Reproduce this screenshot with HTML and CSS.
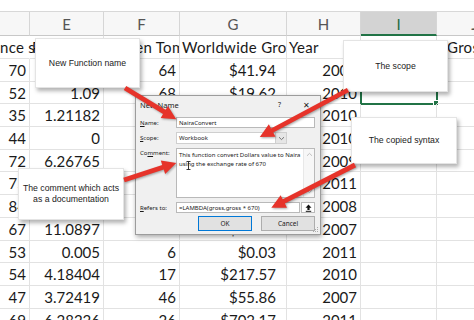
FILE: index.html
```html
<!DOCTYPE html>
<html lang="en">
<head>
    <meta charset="UTF-8">
    <meta name="viewport" content="width=device-width, initial-scale=1.0">
    <title>New Name - LAMBDA</title>
    <link rel="stylesheet" href="styles.css">
</head>
<body>

<div class="sheet">
    <div class="top-strip"></div>

    <div class="row head">
        <div class="cell"></div>
        <div class="cell">E</div>
        <div class="cell">F</div>
        <div class="cell">G</div>
        <div class="cell">H</div>
        <div class="cell picked">I</div>
        <div class="cell">J</div>
    </div>

    <div class="row first">
        <div class="cell txt spill">nce s</div>
        <div class="cell txt">Profitability</div>
        <div class="cell txt">Rotten Tomatoes %</div>
        <div class="cell txt">Worldwide Gross</div>
        <div class="cell txt">Year</div>
        <div class="cell"></div>
        <div class="cell txt gross">Gross</div>
    </div>

    <div class="row"><div class="cell">70</div><div class="cell">1.74</div><div class="cell">64</div><div class="cell money">$41.94</div><div class="cell">2008</div><div class="cell"></div><div class="cell"></div></div>
    <div class="row"><div class="cell">52</div><div class="cell">1.09</div><div class="cell">68</div><div class="cell money">$19.62</div><div class="cell">2010</div><div class="cell active"></div><div class="cell"></div></div>
    <div class="row"><div class="cell">35</div><div class="cell">1.21182</div><div class="cell">43</div><div class="cell money">$26.66</div><div class="cell">2010</div><div class="cell"></div><div class="cell"></div></div>
    <div class="row"><div class="cell">44</div><div class="cell">0</div><div class="cell">15</div><div class="cell money">$0.00</div><div class="cell">2010</div><div class="cell"></div><div class="cell"></div></div>
    <div class="row"><div class="cell">72</div><div class="cell">6.26765</div><div class="cell">87</div><div class="cell money">$93.40</div><div class="cell">2009</div><div class="cell"></div><div class="cell"></div></div>
    <div class="row"><div class="cell">75</div><div class="cell">2.36</div><div class="cell">54</div><div class="cell money">$25.31</div><div class="cell">2011</div><div class="cell"></div><div class="cell"></div></div>
    <div class="row"><div class="cell">84</div><div class="cell">1.98</div><div class="cell">89</div><div class="cell money">$8.37</div><div class="cell">2008</div><div class="cell"></div><div class="cell"></div></div>
    <div class="row"><div class="cell">67</div><div class="cell">11.0897</div><div class="cell">49</div><div class="cell money">$61.74</div><div class="cell">2007</div><div class="cell"></div><div class="cell"></div></div>
    <div class="row"><div class="cell">53</div><div class="cell">0.005</div><div class="cell">6</div><div class="cell money">$0.03</div><div class="cell">2011</div><div class="cell"></div><div class="cell"></div></div>
    <div class="row"><div class="cell">54</div><div class="cell">4.18404</div><div class="cell">17</div><div class="cell money">$217.57</div><div class="cell">2010</div><div class="cell"></div><div class="cell"></div></div>
    <div class="row"><div class="cell">47</div><div class="cell">3.72419</div><div class="cell">46</div><div class="cell money">$55.86</div><div class="cell">2007</div><div class="cell"></div><div class="cell"></div></div>
    <div class="row"><div class="cell">69</div><div class="cell">6.28226</div><div class="cell">26</div><div class="cell money">$702.17</div><div class="cell">2011</div><div class="cell"></div><div class="cell"></div></div>
</div>

<!-- callouts over the sheet -->
<div class="callout c-name">New Function name</div>
<div class="callout c-scope">The scope</div>
<div class="callout c-syntax">The copied syntax</div>
<div class="callout c-comment">The comment which acts<br>as a documentation</div>

<!-- New Name dialog -->
<div class="dialog">
    <div class="dlg-title">
        <span>New Name</span>
        <span class="dlg-help">?</span>
        <span class="dlg-close">✕</span>
    </div>
    <div class="dlg-form">
        <label><u>N</u>ame:</label>
        <div class="field">NairaConvert</div>

        <label><u>S</u>cope:</label>
        <div class="field select">
            <span>Workbook</span>
            <span class="drop">
                <svg width="7" height="5" viewBox="0 0 7 5"><path d="M1 1.2 3.5 3.6 6 1.2" fill="none" stroke="#666" stroke-width="0.9"/></svg>
            </span>
        </div>

        <label class="top">Co<u>m</u>ment:</label>
        <div class="field area">
            <div class="area-text">This function convert Dollars value to Naira using the exchange rate of 670</div>
            <div class="area-scroll">
                <svg width="7" height="5" viewBox="0 0 7 5"><path d="M1 3.8 3.5 1.4 6 3.8" fill="none" stroke="#bbb" stroke-width="0.9"/></svg>
                <svg width="7" height="5" viewBox="0 0 7 5"><path d="M1 1.2 3.5 3.6 6 1.2" fill="none" stroke="#bbb" stroke-width="0.9"/></svg>
            </div>
            <svg class="ibeam" width="5" height="9" viewBox="0 0 5 9"><path d="M0.5 0.5H4.5M2.5 0.5V8.5M0.5 8.5H4.5" fill="none" stroke="#222" stroke-width="0.9"/></svg>
        </div>

        <label><u>R</u>efers to:</label>
        <div class="refers">
            <div class="field">=LAMBDA(gross,gross * 670)</div>
            <span class="collapse">
                <svg width="7" height="8" viewBox="0 0 7 8"><path d="M3.5 0.5 6.5 3.8H4.6V6H2.4V3.8H0.5Z" fill="#111"/><rect x="0.8" y="6.8" width="5.4" height="1" fill="#111"/></svg>
            </span>
        </div>
    </div>
    <div class="dlg-actions">
        <button class="ok">OK</button>
        <button>Cancel</button>
    </div>
    <svg class="grip" width="6" height="6" viewBox="0 0 6 6"><g fill="#aaa"><rect x="4" y="0" width="1" height="1"/><rect x="2" y="2" width="1" height="1"/><rect x="4" y="2" width="1" height="1"/><rect x="0" y="4" width="1" height="1"/><rect x="2" y="4" width="1" height="1"/><rect x="4" y="4" width="1" height="1"/></g></svg>
</div>

<!-- red arrows -->
<svg class="arrows" width="474" height="320" viewBox="0 0 474 320">
    <g fill="#e6332a">
        <path transform="translate(125 88) rotate(31.3)" d="M0,-2.4H46V-7L60,0L46,7V2.4H0Z"/>
        <path transform="translate(348 90) rotate(151.9)" d="M0,-2.4H86V-7L100,0L86,7V2.4H0Z"/>
        <path transform="translate(124 180) rotate(-18.1)" d="M0,-2.4H41V-7L55,0L41,7V2.4H0Z"/>
        <path transform="translate(355 165) rotate(152.9)" d="M0,-2.4H80V-7L94,0L80,7V2.4H0Z"/>
    </g>
</svg>

</body>
</html>
```

FILE: styles.css
```css
body {
    margin: 0;
    width: 474px;
    height: 320px;
    overflow: hidden;
    position: relative;
    background-color: white;
    font-family: Lato, "Open Sans", sans-serif;
}

/* spreadsheet */
.sheet {
    width: 474px;
    overflow: hidden;
    font-size: 15px;
    color: #1a1a1a;
}
.top-strip {
    height: 11px;
    border-bottom: 1px solid #d8d8d8;
}
.row {
    display: grid;
    grid-template-columns: 30px 74px 76px 107px 74px 76px 76px;
    height: 22.7px;
}
.row.head {
    height: 24px;
    background-color: #f7f7f7;
    color: #555;
}
.row.first {
    height: 23px;
}
.cell {
    box-sizing: border-box;
    border-right: 1px solid #e2e2e2;
    border-bottom: 1px solid #e2e2e2;
    padding: 0 3px;
    text-align: right;
    line-height: 22px;
    white-space: nowrap;
    overflow: hidden;
    position: relative;
}
.head .cell {
    text-align: center;
    line-height: 24px;
    border-right-color: #d6d6d6;
    border-bottom-color: #c8c8c8;
}
.head .cell.picked {
    background-color: #d3d3d3;
    color: #1e6b40;
    border-bottom: 2px solid #217346;
}
.cell.txt {
    text-align: left;
    padding-left: 2px;
    letter-spacing: 0.3px;
}
.cell.spill {
    overflow: visible;
    padding-left: 0;
    border-right-color: transparent;
}
.cell.gross {
    padding-left: 10px;
}
.cell.money {
    padding-right: 10px;
}
.cell.active {
    overflow: visible;
    outline: 2px solid #217346;
    outline-offset: -1px;
}
.cell.active::after {
    content: "";
    position: absolute;
    right: -3px;
    bottom: -3px;
    width: 4px;
    height: 4px;
    background-color: #217346;
    border: 1px solid white;
}

/* callouts */
.callout {
    position: absolute;
    box-sizing: border-box;
    display: flex;
    align-items: center;
    justify-content: center;
    text-align: center;
    white-space: nowrap;
    background-color: white;
    border: 1px solid #e4e4e4;
    box-shadow: 2px 3px 4px rgba(0, 0, 0, 0.3);
    font-family: "Liberation Sans", Arial, sans-serif;
    font-size: 8.7px;
    line-height: 11px;
    color: #222;
}
.c-name {
    left: 35px;
    top: 38px;
    width: 105px;
    height: 50px;
}
.c-scope {
    left: 343px;
    top: 40px;
    width: 105px;
    height: 52px;
}
.c-syntax {
    left: 351px;
    top: 117px;
    width: 106px;
    height: 47px;
}
.c-comment {
    left: 18px;
    top: 168px;
    width: 106px;
    height: 52px;
}

/* dialog */
.dialog {
    position: absolute;
    left: 135px;
    top: 95px;
    width: 186px;
    height: 140px;
    box-sizing: border-box;
    padding: 0 5px 0 4px;
    background-color: #f0f0f0;
    border: 1px solid #9c9c9c;
    box-shadow: 1px 2px 5px rgba(0, 0, 0, 0.35);
    font-family: "Noto Sans", "Open Sans", sans-serif;
    font-size: 6px;
    color: #1a1a1a;
}
.dlg-title {
    display: flex;
    align-items: center;
    height: 17px;
    font-size: 7.5px;
}
.dlg-title span:first-child {
    flex: 1;
}
.dlg-help {
    margin-right: 22px;
    font-size: 7px;
}
.dlg-close {
    margin-right: 5px;
    font-size: 8px;
}
.dlg-form {
    margin-top: 4px;
    display: grid;
    grid-template-columns: 36px 139px;
    grid-template-rows: 11px 12px 50px 11px;
    row-gap: 4px;
}
.dlg-form label {
    display: flex;
    align-items: center;
}
.dlg-form label.top {
    align-items: flex-start;
    padding-top: 1px;
}
.field {
    box-sizing: border-box;
    display: flex;
    align-items: center;
    padding: 0 2px;
    background-color: white;
    border: 1px solid #b9b9b9;
    white-space: nowrap;
    overflow: hidden;
}
.field.select {
    width: 111px;
    justify-content: space-between;
    padding-right: 0;
    border-color: #cfcfcf;
}
.drop {
    width: 10px;
    height: 100%;
    display: flex;
    align-items: center;
    justify-content: center;
    background-color: #e6e6e6;
    border-left: 1px solid #cfcfcf;
}
.field.area {
    align-items: stretch;
    padding: 0;
    position: relative;
    white-space: normal;
}
.area-text {
    flex: 1;
    padding: 2px 2px 0 2px;
    line-height: 9px;
}
.area-scroll {
    width: 10px;
    display: flex;
    flex-direction: column;
    justify-content: space-between;
    align-items: center;
    padding: 3px 0;
    border-left: 1px solid #e8e8e8;
    background-color: #f7f7f7;
}
.ibeam {
    position: absolute;
    left: 9px;
    top: 12px;
}
.refers {
    display: flex;
    gap: 1px;
}
.refers .field {
    flex: 1;
}
.collapse {
    width: 12px;
    display: flex;
    align-items: center;
    justify-content: center;
    background-color: white;
    border: 1px solid #b9b9b9;
}
.dlg-actions {
    margin-top: 3px;
    display: flex;
    justify-content: flex-end;
    gap: 9px;
}
.dlg-actions button {
    width: 54px;
    height: 15px;
    padding: 0;
    background-color: #e1e1e1;
    border: 1px solid #adadad;
    font-family: "Noto Sans", "Open Sans", sans-serif;
    font-size: 6.5px;
    color: #1a1a1a;
}
.dlg-actions button.ok {
    border: 1px solid #0078d7;
}
.grip {
    position: absolute;
    right: 1px;
    bottom: 1px;
}

/* arrows drawn over everything */
.arrows {
    position: absolute;
    left: 0;
    top: 0;
    pointer-events: none;
    filter: drop-shadow(1px 1px 1px rgba(0, 0, 0, 0.35));
}
```
